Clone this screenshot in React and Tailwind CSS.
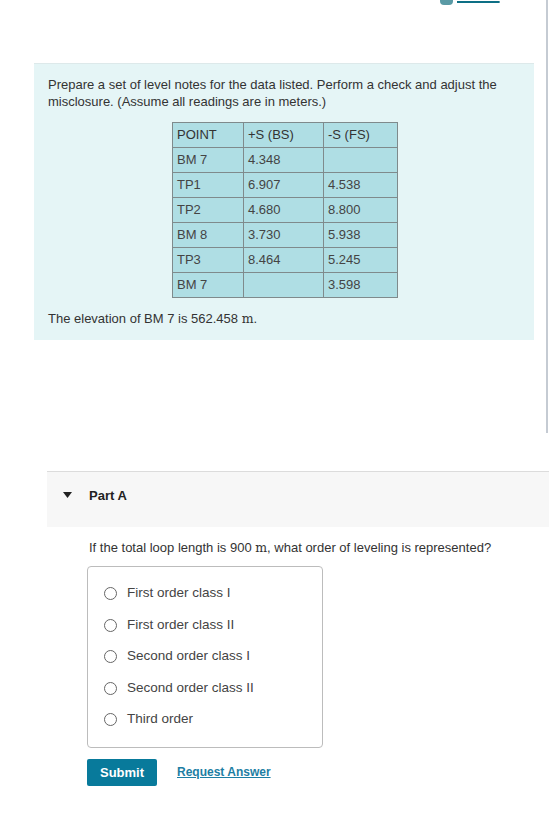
import React from 'react';

const rows = [
    ['BM 7', '4.348', ''],
    ['TP1', '6.907', '4.538'],
    ['TP2', '4.680', '8.800'],
    ['BM 8', '3.730', '5.938'],
    ['TP3', '8.464', '5.245'],
    ['BM 7', '', '3.598'],
];

const options = [
    'First order class I',
    'First order class II',
    'Second order class I',
    'Second order class II',
    'Third order',
];

const M = () => <span className="font-['DejaVu_Serif',serif] text-[12.5px]">m</span>;

export default function App() {
    return (
        <div className="relative w-[549px] h-[819px] bg-white font-['Liberation_Sans',Arial,sans-serif] text-[#333] overflow-hidden">
            {/* clipped top link */}
            <div className="absolute top-[-15px] left-[440px] flex items-end gap-1">
                <div className="w-[13px] h-[16px] bg-[#5a9aa5] rounded-sm" />
                <span className="text-[13px] text-[#0d6f85] underline decoration-2 underline-offset-2">Review</span>
            </div>
            {/* right scroll edge */}
            <div className="absolute top-0 left-[546px] w-[2px] h-[433px] bg-[#c5cbd3]" />

            <div className="pt-[63px] pl-[34px]">
                <div className="w-[500px] h-[277px] bg-[#e5f5f6] border-t border-[#dde9ea] pt-[12px] px-[14px]">
                    <p className="text-[13px] leading-[17px]">
                        Prepare a set of level notes for the data listed. Perform a check and adjust the misclosure. (Assume all readings are in meters.)
                    </p>
                    <table className="ml-[124px] mt-[12px] border-collapse text-[13px] bg-[#afdee4]">
                        <thead>
                            <tr className="h-[25px]">
                                <th className="w-[71px] border border-[#7f8a8c] text-left font-normal px-1">POINT</th>
                                <th className="w-[80px] border border-[#7f8a8c] text-left font-normal px-1">+S (BS)</th>
                                <th className="w-[74px] border border-[#7f8a8c] text-left font-normal px-1">-S (FS)</th>
                            </tr>
                        </thead>
                        <tbody>
                            {rows.map((r, i) => (
                                <tr key={i} className="h-[25px]">
                                    {r.map((c, j) => (
                                        <td key={j} className="border border-[#7f8a8c] px-1 text-[#444]">{c}</td>
                                    ))}
                                </tr>
                            ))}
                        </tbody>
                    </table>
                    <p className="mt-[11px] text-[13px]">The elevation of BM 7 is 562.458 <M />.</p>
                </div>
            </div>

            <div className="mt-[131px] ml-[47px] h-[56px] bg-[#f7f7f7] border-t border-[#dcdcdc] flex items-start pt-[14px]">
                <svg width="9" height="6" viewBox="0 0 9 6" className="ml-[16px] mt-[6px]">
                    <polygon points="0,0 9,0 4.5,6" fill="#222" />
                </svg>
                <span className="ml-[17px] text-[13px] font-bold text-[#222]">Part A</span>
            </div>

            <div className="ml-[89px] mt-[11px]">
                <p className="text-[13px]">If the total loop length is 900 <M />, what order of leveling is represented?</p>
                <div className="mt-[8px] -ml-[2px] w-[236px] h-[182px] border border-[#bcbcbc] rounded-[4px] pt-[19px] pl-[16px]">
                    {options.map((o) => (
                        <label key={o} className="flex items-center h-[31.5px] -mt-[8px] mb-[8px] text-[13.5px] text-[#444]">
                            <span className="w-[13px] h-[13px] rounded-full border border-[#666] bg-white" />
                            <span className="ml-[10px]">{o}</span>
                        </label>
                    ))}
                </div>
                <div className="mt-[11px] -ml-[2px] flex items-center">
                    <button className="w-[70px] h-[27px] bg-[#087a9b] text-white text-[13px] font-bold rounded-[2px]">Submit</button>
                    <span className="ml-[20px] text-[12px] font-bold text-[#1d7ea3] underline">Request Answer</span>
                </div>
            </div>
        </div>
    );
}
